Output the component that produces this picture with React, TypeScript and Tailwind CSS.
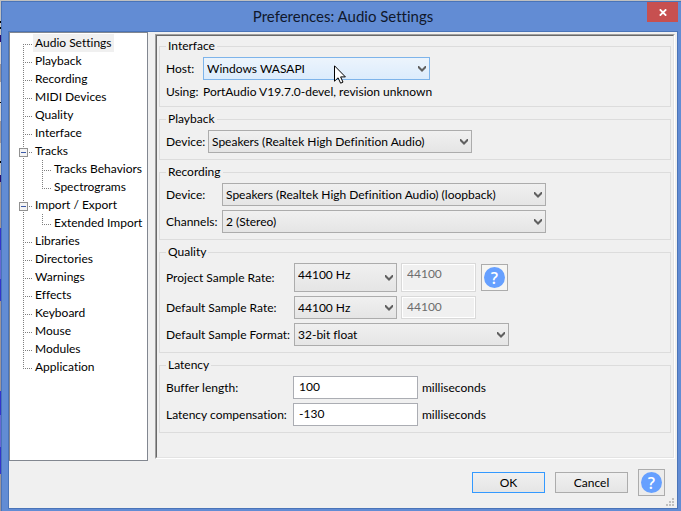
import React, { useState } from "react"

type TreeItem = {
  label: string
  child?: boolean
  expandable?: boolean
  lastChild?: boolean
}

const treeItems: TreeItem[] = [
  { label: "Audio Settings" },
  { label: "Playback" },
  { label: "Recording" },
  { label: "MIDI Devices" },
  { label: "Quality" },
  { label: "Interface" },
  { label: "Tracks", expandable: true },
  { label: "Tracks Behaviors", child: true },
  { label: "Spectrograms", child: true, lastChild: true },
  { label: "Import / Export", expandable: true },
  { label: "Extended Import", child: true, lastChild: true },
  { label: "Libraries" },
  { label: "Directories" },
  { label: "Warnings" },
  { label: "Effects" },
  { label: "Keyboard" },
  { label: "Mouse" },
  { label: "Modules" },
  { label: "Application" },
]

// slice of the application window behind the dialog
const backdrop = [
  "h-[21px] bg-[#c0c0c0]",
  "h-[2px] bg-black",
  "h-[4px] bg-[#c0c0c0]",
  "h-[2px] bg-black",
  "h-[6px] bg-[#c0c0c0]",
  "h-[7px] bg-[#2a0a70]",
  "h-[22px] bg-[#d4d0d0]",
  "h-[18px] bg-[#9c9499]",
  "h-[20px] bg-[#d4d0d0]",
  "h-[1px] bg-black",
  "h-[18px] bg-[#d4d0d0]",
  "h-[22px] bg-[#9c9499]",
  "h-[18px] bg-[#c0c0c0]",
  "h-[2px] bg-black",
  "h-[12px] bg-[#c0c0c0]",
  "h-[7px] bg-[#2a0a70]",
  "h-[46px] bg-[#9c9499]",
  "h-[22px] bg-[#3333cc]",
  "h-[29px] bg-[#6666d4]",
  "h-[22px] bg-[#3333cc]",
  "h-[90px] bg-[#9c9499]",
  "h-[24px] bg-[#3333cc]",
  "h-[32px] bg-[#6666d4]",
  "h-[27px] bg-[#3333cc]",
  "flex-1 bg-[#9c9499]",
]

function TreeLines({ item, first, last }: { item: TreeItem; first: boolean; last: boolean }) {
  const width = item.child ? 42 : 23
  return (
    <svg width={width} height={18} className="shrink-0" shapeRendering="crispEdges" aria-hidden="true">
      <g stroke="#808080" strokeDasharray="1 1" fill="none">
        <path d={`M13.5 ${first ? 10 : 0}V${last ? 11 : 18}`} />
        {item.child ? (
          <>
            <path d={`M32.5 0V${item.lastChild ? 11 : 18}`} />
            <path d="M32 10.5H41" />
          </>
        ) : (
          <path d="M13 10.5H22" />
        )}
      </g>
      {item.expandable && (
        <>
          <rect x="9.5" y="6.5" width="8" height="8" fill="#f4f4f4" stroke="#919191" />
          <path d="M11 10.5H16" stroke="#3c5aa8" />
        </>
      )}
    </svg>
  )
}

function Group({ title, children }: { title: string; children: React.ReactNode }) {
  return (
    <fieldset className="min-w-0 border border-[#dcdcdc] px-1.5 pt-[3px] pb-1.5">
      <legend className="h-4 px-0.5 leading-4">{title}</legend>
      <div className="flex flex-col gap-1">{children}</div>
    </fieldset>
  )
}

type SelectProps = {
  id: string
  value: string
  width: string
  hot?: boolean
  tall?: boolean
}

function Select({ id, value, width, hot, tall }: SelectProps) {
  return (
    <div className={`relative ${width}`}>
      <select
        id={id}
        defaultValue={value}
        className={`block w-full appearance-none border pl-[3px] pr-5 leading-4 outline-none ${
          tall ? "h-[29px] pb-1.5" : "h-[23px]"
        } ${
          hot
            ? "border-[#7eb4ea] bg-linear-to-b from-[#ecf4fc] to-[#dcecfc]"
            : "border-[#acacac] bg-linear-to-b from-[#f0f0f0] to-[#e5e5e5]"
        }`}
      >
        <option>{value}</option>
      </select>
      <svg
        width="8"
        height="6"
        viewBox="0 0 8 6"
        className="pointer-events-none absolute top-1/2 right-1 -translate-y-1/2"
        aria-hidden="true"
      >
        <path d="M0 0H1L4 3L7 0H8V2L4 6L0 2Z" fill="#606060" />
      </svg>
      {hot && (
        <svg width="12" height="19" viewBox="0 0 12 19" className="pointer-events-none absolute top-2 left-[131px]" aria-hidden="true">
          <path
            d="M.5 .8V16.2L4.1 12.8L6.6 18.2L9 17.1L6.6 11.9H11.4Z"
            fill="white"
            stroke="black"
            strokeWidth="1"
          />
        </svg>
      )}
    </div>
  )
}

function HelpButton({ label, className }: { label: string; className: string }) {
  return (
    <button
      type="button"
      aria-label={label}
      className={`flex h-[27px] w-[27px] items-center justify-center border border-[#acacac] ${className}`}
    >
      <span className="flex h-[21px] w-[21px] items-center justify-center rounded-full bg-[#66a0ff] font-['Open_Sans',sans-serif] text-base leading-5 font-semibold text-white">
        ?
      </span>
    </button>
  )
}

const disabledInput = "w-[75px] border border-[#d9d9d9] bg-[#f0f0f0] pl-[5px] leading-4 text-[#6d6d6d] shadow-[inset_0_0_0_1px_white]"
const textInput = "h-[23px] w-[125px] border border-[#abadb3] bg-white pl-[5px] pb-0.5 leading-4 outline-none"
const pushButton = "h-[21px] w-[73px] border bg-linear-to-b from-[#f0f0f0] to-[#e5e5e5] leading-4"

export default function App() {
  const [selected, setSelected] = useState("Audio Settings")

  return (
    <div className="flex min-h-screen bg-[#c0c0c0] font-['Lato','Open_Sans',sans-serif] text-[12px] leading-4 text-black [font-variant-ligatures:none]">
      <div className="flex w-px shrink-0 flex-col">
        {backdrop.map((cls, i) => (
          <div key={i} className={cls} />
        ))}
      </div>

      <div className="mt-px flex flex-1 flex-col border-t border-l border-[#4a74b8] bg-[#628cd4] pr-[3px] pb-0.5">
        {/* Title bar */}
        <header className="flex h-[29px] items-start">
          <h1 className="flex-1 pl-[37px] text-center text-[15px] leading-[29px] text-[#10182c]">
            Preferences: Audio Settings
          </h1>
          <button
            type="button"
            aria-label="Close"
            className="flex h-5 w-[31px] items-center justify-center bg-[#c75050]"
          >
            <svg width="8" height="7" viewBox="0 0 8 7" aria-hidden="true">
              <path d="M.8 .3L7.2 6.7M7.2 .3L.8 6.7" stroke="white" strokeWidth="1.8" />
            </svg>
          </button>
        </header>

        <main className="ml-1.5 flex flex-1 flex-col border border-[#4a74b8] bg-[#f0f0f0]">
          <div className="flex">
            {/* Category tree */}
            <nav aria-label="Categories" className="w-[139px] shrink-0 border border-[#828790] bg-white pt-px">
              <ul>
                {treeItems.map((item, i) => (
                  <li key={item.label} className="flex h-[18px]">
                    <TreeLines item={item} first={i === 0} last={i === treeItems.length - 1} />
                    <button
                      type="button"
                      onClick={() => setSelected(item.label)}
                      className={`px-0.5 leading-[18px] whitespace-nowrap ${
                        selected === item.label ? "bg-[#f0f0f0]" : ""
                      }`}
                    >
                      {item.label}
                    </button>
                  </li>
                ))}
              </ul>
            </nav>

            {/* Settings page */}
            <div className="my-0.5 mr-0.5 ml-[7px] min-w-0 flex-1 border border-t-[#a0a0a0] border-r-white border-b-white border-l-[#a0a0a0]">
              <div className="flex h-full flex-col gap-1 border border-t-[#696969] border-r-[#e3e3e3] border-b-[#e3e3e3] border-l-[#696969] px-0.5 pt-0.5 pb-6">
                <Group title="Interface">
                  <div className="flex items-center">
                    <label htmlFor="host" className="w-[37px]">Host:</label>
                    <Select id="host" value="Windows WASAPI" width="w-[227px]" hot />
                  </div>
                  <div className="flex whitespace-nowrap">
                    <span className="w-[37px]">Using:</span>
                    <span>PortAudio V19.7.0-devel, revision unknown</span>
                  </div>
                </Group>

                <Group title="Playback">
                  <div className="flex items-center">
                    <label htmlFor="playback-device" className="w-[42px]">Device:</label>
                    <Select id="playback-device" value="Speakers (Realtek High Definition Audio)" width="w-[264px]" />
                  </div>
                </Group>

                <Group title="Recording">
                  <div className="flex items-center">
                    <label htmlFor="recording-device" className="w-14">Device:</label>
                    <Select id="recording-device" value="Speakers (Realtek High Definition Audio) (loopback)" width="w-[324px]" />
                  </div>
                  <div className="flex items-center">
                    <label htmlFor="channels" className="w-14">Channels:</label>
                    <Select id="channels" value="2 (Stereo)" width="w-[324px]" />
                  </div>
                </Group>

                <Group title="Quality">
                  <div className="flex items-center gap-1 whitespace-nowrap">
                    <label htmlFor="project-rate" className="w-[124px]">Project Sample Rate:</label>
                    <Select id="project-rate" value="44100 Hz" width="w-[103px]" tall />
                    <input aria-label="Project sample rate value" disabled defaultValue="44100" className={`${disabledInput} h-[29px] pb-2`} />
                    <HelpButton label="Help on sample rates" className="ml-px bg-[#f6f6f4]" />
                  </div>
                  <div className="flex items-center gap-1 whitespace-nowrap">
                    <label htmlFor="default-rate" className="w-[124px]">Default Sample Rate:</label>
                    <Select id="default-rate" value="44100 Hz" width="w-[103px]" />
                    <input aria-label="Default sample rate value" disabled defaultValue="44100" className={`${disabledInput} h-[23px] pb-0.5`} />
                  </div>
                  <div className="flex items-center gap-1 whitespace-nowrap">
                    <label htmlFor="sample-format" className="w-[124px]">Default Sample Format:</label>
                    <Select id="sample-format" value="32-bit float" width="w-[215px]" />
                  </div>
                </Group>

                <Group title="Latency">
                  <div className="flex items-center gap-1 whitespace-nowrap">
                    <label htmlFor="buffer" className="w-[123px]">Buffer length:</label>
                    <input id="buffer" defaultValue="100" className={textInput} />
                    <span>milliseconds</span>
                  </div>
                  <div className="flex items-center gap-1 whitespace-nowrap">
                    <label htmlFor="compensation" className="w-[123px]">Latency compensation:</label>
                    <input id="compensation" defaultValue="-130" className={textInput} />
                    <span>milliseconds</span>
                  </div>
                </Group>
              </div>
            </div>
          </div>

          {/* Dialog buttons */}
          <footer className="relative flex flex-1 items-center justify-end gap-2.5 pt-2 pr-3 pb-3">
            <button type="button" className={`${pushButton} border-[#3399ff]`}>OK</button>
            <button type="button" className={`${pushButton} border-[#acacac]`}>Cancel</button>
            <HelpButton label="Help" className="bg-[#ececec]" />
            <svg width="8" height="8" className="absolute right-[3px] bottom-0.5" fill="#bfbfbf" aria-hidden="true">
              <path d="M6 0h2v2H6zM3 3h2v2H3zM6 3h2v2H6zM0 6h2v2H0zM3 6h2v2H3zM6 6h2v2H6z" />
            </svg>
          </footer>
        </main>
      </div>
    </div>
  )
}
